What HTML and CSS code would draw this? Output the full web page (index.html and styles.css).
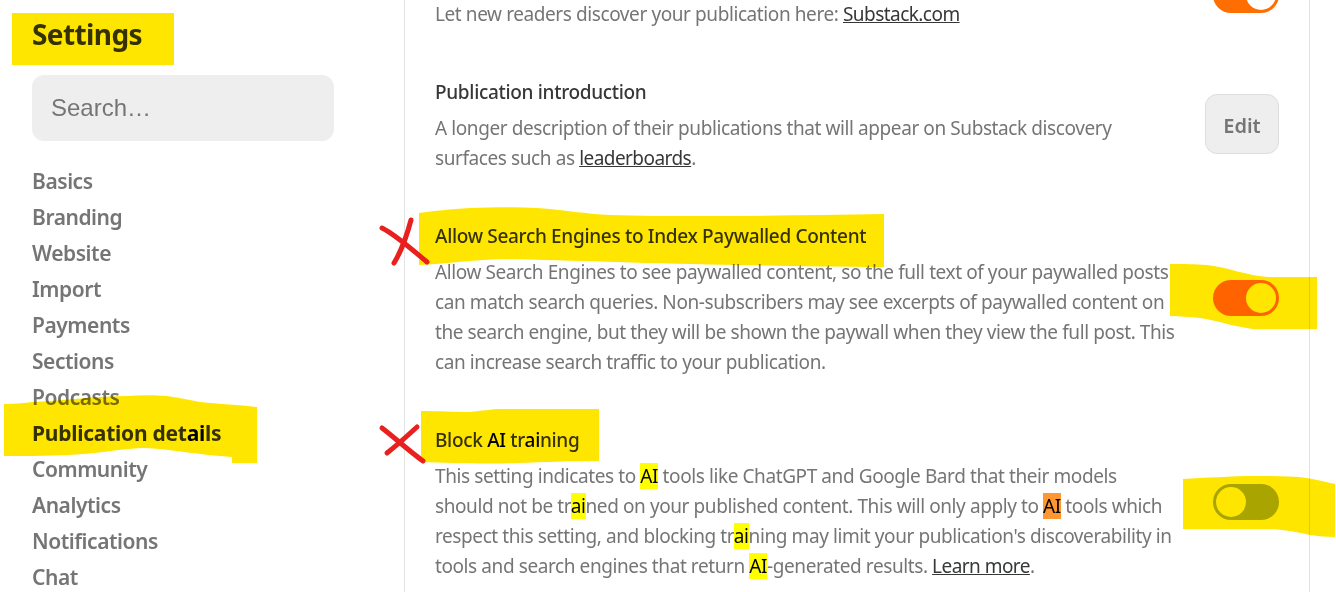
FILE: index.html
```html
<!DOCTYPE html>
<html>
<head>
    <title>Settings</title>
    <link rel="stylesheet" href="styles.css">
</head>
<body>
    <div class="page">
        <aside class="sidebar">
            <h1>Settings</h1>
            <input class="search" type="text" placeholder="Search…">
            <nav class="side-nav">
                <a href="#">Basics</a>
                <a href="#">Branding</a>
                <a href="#">Website</a>
                <a href="#">Import</a>
                <a href="#">Payments</a>
                <a href="#">Sections</a>
                <a href="#">Podcasts</a>
                <a href="#" class="active">Publication det<mark>ai</mark>ls</a>
                <a href="#">Community</a>
                <a href="#">Analytics</a>
                <a href="#">Notifications</a>
                <a href="#">Chat</a>
            </nav>
        </aside>
        <main class="content">
            <section class="row">
                <div class="row-text">
                    <p>Let new readers discover your publication here: <a href="#">Substack.com</a></p>
                </div>
                <span class="toggle on cut"><i></i></span>
            </section>
            <section class="row">
                <div class="row-text">
                    <h3>Publication introduction</h3>
                    <p>A longer description of their publications that will appear on Substack discovery surfaces such as <a href="#">leaderboards</a>.</p>
                </div>
                <button class="edit">Edit</button>
            </section>
            <section class="row">
                <div class="row-text">
                    <h3>Allow Search Engines to Index Paywalled Content</h3>
                    <p>Allow Search Engines to see paywalled content, so the full text of your paywalled posts can match search queries. Non-subscribers may see excerpts of paywalled content on the search engine, but they will be shown the paywall when they view the full post. This can increase search traffic to your publication.</p>
                </div>
                <span class="toggle on"><i></i></span>
            </section>
            <section class="row">
                <div class="row-text">
                    <h3>Block <mark>AI</mark> tr<mark>ai</mark>ning</h3>
                    <p>This setting indicates to <mark>AI</mark> tools like ChatGPT and Google Bard that their models should not be tr<mark>ai</mark>ned on your published content. This will only apply to <mark class="current">AI</mark> tools which respect this setting, and blocking tr<mark>ai</mark>ning may limit your publication's discoverability in tools and search engines that return <mark>AI</mark>-generated results. <a href="#">Learn more</a>.</p>
                </div>
                <span class="toggle"><i></i></span>
            </section>
        </main>
    </div>

    <!-- marker scribbles on top of the screenshot -->
    <svg class="marker" width="1336" height="592" viewBox="0 0 1336 592">
        <path d="M12 13H174V65H12Z"/>
        <path d="M4 404C14 404 24 403 33 402C70 400 100 396 127 396C140 395 155 395 167 396C180 398 190 400 200 402C220 404 240 405 257 407V463H232V457C200 455 170 449 143 448C120 449 100 453 83 454C55 456 30 456 4 456Z"/>
        <path d="M419 213C435 211 450 209 470 208C495 207 520 207 537 208C565 210 585 214 610 215C640 216 670 216 703 216C760 216 820 215 884 214V267C830 267 780 266 737 265C660 264 560 260 503 259C470 260 445 264 419 265Z"/>
        <path d="M421 411C440 411 455 412 470 412C482 411 490 409 503 409H599V461C570 461 545 462 517 463C485 464 450 463 421 462Z"/>
        <path d="M1170 264C1185 264 1195 264 1207 265C1230 268 1245 275 1267 277H1317V329H1253C1235 327 1220 321 1200 318C1190 317 1180 316 1170 316Z"/>
        <path d="M1183 479C1205 478 1230 476 1257 476C1275 476 1292 476 1307 478C1318 480 1326 482 1335 484V537C1326 537 1318 536 1310 535C1298 532 1285 530 1273 529H1183Z"/>
    </svg>
    <svg class="crosses" width="1336" height="592" viewBox="0 0 1336 592">
        <path d="M411 220C407 235 402 250 394 263"/>
        <path d="M382 228C396 235 410 248 427 262"/>
        <path d="M417 427C405 438 396 446 387 453"/>
        <path d="M382 428C395 438 408 450 423 461"/>
    </svg>
</body>
</html>
```

FILE: styles.css
```css
body {
    margin: 0;
    background: #fff;
    font-family: "Noto Sans", "Open Sans", sans-serif;
    color: #757575;
    overflow: hidden;
}
.page {
    display: flex;
    width: 1336px;
    height: 592px;
    overflow: hidden;
}

/* left column */
.sidebar {
    flex: none;
    width: 372px;
    padding-left: 32px;
    border-right: 1px solid #e3e3e3;
}
.sidebar h1 {
    margin: 14px 0 21px;
    font-size: 28px;
    line-height: 40px;
    font-weight: 700;
    letter-spacing: -0.6px;
    color: #363737;
}
.search {
    display: block;
    box-sizing: border-box;
    width: 302px;
    height: 66px;
    padding: 0 19px;
    border: none;
    border-radius: 12px;
    background: #eee;
    font-family: "Liberation Sans", Arial, sans-serif;
    font-size: 24px;
}
.search::placeholder {
    color: #757575;
    opacity: 1;
}
.side-nav {
    margin-top: 22px;
}
.side-nav a {
    display: block;
    height: 36px;
    font-size: 21px;
    line-height: 36px;
    font-weight: 600;
    letter-spacing: -0.45px;
    color: #757575;
    text-decoration: none;
}
.side-nav a.active {
    font-weight: 700;
    letter-spacing: -0.25px;
    color: #363737;
}

/* right column */
.content {
    flex: none;
    box-sizing: border-box;
    width: 905px;
    margin-top: -1px;
    padding: 0 30px;
    border-right: 1px solid #e3e3e3;
}
.row {
    display: flex;
    align-items: center;
    justify-content: space-between;
    margin-bottom: 48px;
}
.row-text {
    flex: none;
    width: 742px;
}
.row h3 {
    margin: 0 0 6px;
    font-size: 19px;
    line-height: 30px;
    font-weight: 500;
    letter-spacing: -0.32px;
    color: #363737;
}
.row p {
    margin: 0;
    font-size: 19px;
    line-height: 30px;
    letter-spacing: -0.41px;
}
.row p a {
    letter-spacing: -0.55px;
    color: #363737;
}
mark {
    background: #ffff00;
    color: #000;
}
mark.current {
    background: #ff9632;
}

.toggle {
    flex: none;
    box-sizing: border-box;
    width: 66px;
    height: 36px;
    margin-bottom: 2px;
    padding: 3px;
    border-radius: 18px;
    background: #a9b6b6;
}
.toggle i {
    display: block;
    width: 30px;
    height: 30px;
    border-radius: 50%;
    background: #fff;
}
.toggle.on {
    background: #ff6e00;
}
.toggle.on i {
    margin-left: 30px;
}
.toggle.cut {
    align-self: flex-start;
    margin-top: -22px;
}
.edit {
    flex: none;
    width: 74px;
    height: 60px;
    margin-bottom: 2px;
    padding: 2px 0 0;
    border: 1px solid #ddd;
    border-radius: 12px;
    background: #eee;
    font-family: inherit;
    font-size: 20px;
    font-weight: 600;
    color: #757575;
}

/* scribbles */
.marker,
.crosses {
    position: absolute;
    top: 0;
    left: 0;
    pointer-events: none;
}
.marker {
    mix-blend-mode: multiply;
}
.marker path {
    fill: #ffe600;
}
.crosses path {
    fill: none;
    stroke: #e8201e;
    stroke-width: 5;
    stroke-linecap: round;
}
```
